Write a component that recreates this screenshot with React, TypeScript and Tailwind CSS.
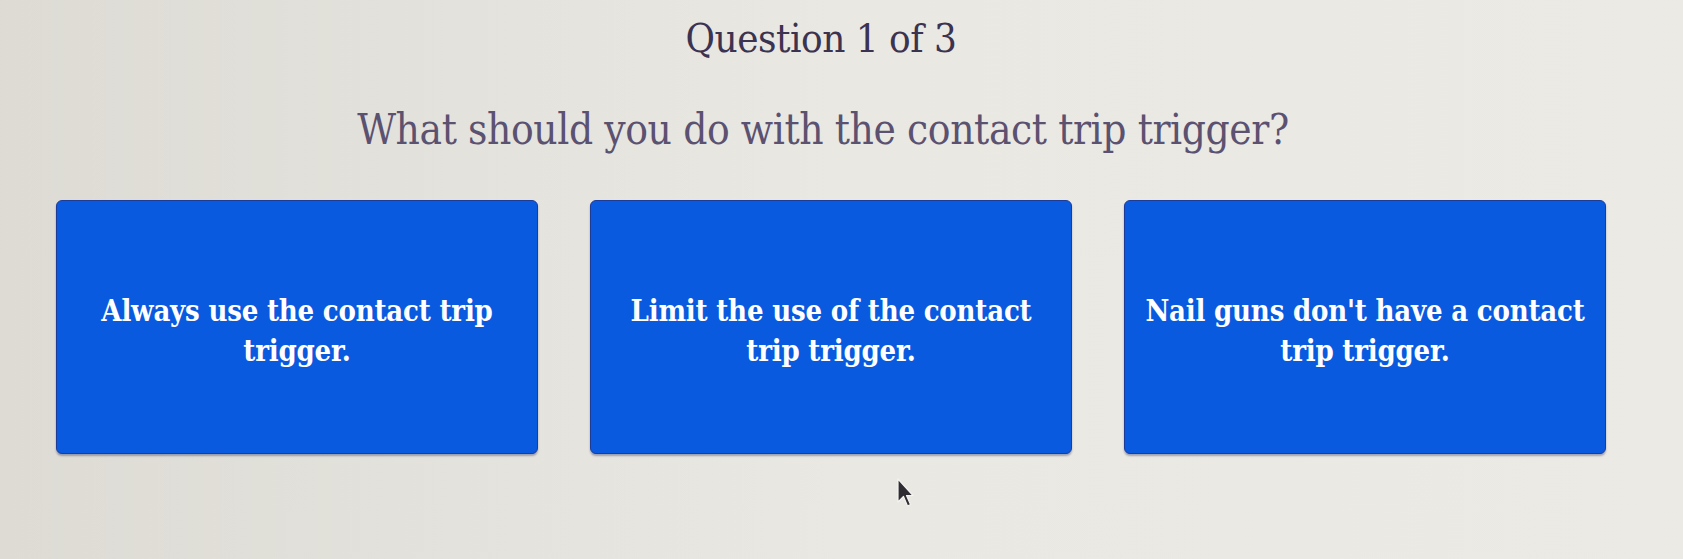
type Choice = {
    id: number
    label: string
}

// answer labels keep their own line breaks
const choices: Choice[] = [
    {id: 1, label: 'Always use the contact trip\ntrigger.'},
    {id: 2, label: 'Limit the use of the contact\ntrip trigger.'},
    {id: 3, label: "Nail guns don't have a contact\ntrip trigger."},
]

function Pointer(){
    return(
        <svg className="absolute left-[896px] top-[478px]" width="18" height="30" viewBox="0 0 18 30">
            <path d="M2 1 L2 24 L7.5 18.5 L11.5 28 L14.5 26.5 L10.5 17.5 L17 17.5 Z" fill="#2f2d33" stroke="#f4f3f0" strokeWidth="1.2" strokeLinejoin="round"/>
        </svg>
    )
}

export default function App(){
    return(
        <div className="relative w-[1683px] h-[559px] overflow-hidden bg-linear-to-r from-[#dddbd4] via-[#e9e8e3] to-[#ebeae5]" style={{fontFamily: '"DejaVu Serif Condensed", "DejaVu Serif", serif'}}>
            <div className="w-[1552px] ml-[56px] flex flex-col items-center">
                <h1 className="mt-[14px] mr-[22px] text-[40px] leading-[48px] text-[#3b3350] tracking-[-0.5px]">Question 1 of 3</h1>
                <h2 className="mt-[44px] mr-[18px] text-[42px] leading-[48px] text-[#5b5170] tracking-[-0.4px]">What should you do with the contact trip trigger?</h2>
                <div className="mt-[46px] flex gap-[52px] w-full">
                    {choices.map(c => (
                        <button key={c.id} className="w-[482px] h-[254px] rounded-md border border-[#1d3c9a] bg-[#0a5ae0] shadow-[0_2px_2px_rgba(20,30,80,0.35)] px-[8px] pt-[8px] flex items-center justify-center text-center">
                            <span className="text-white font-bold text-[29px] leading-[40px] tracking-[-0.2px] whitespace-pre-line">{c.label}</span>
                        </button>
                    ))}
                </div>
            </div>
            <Pointer/>
        </div>
    )
}
